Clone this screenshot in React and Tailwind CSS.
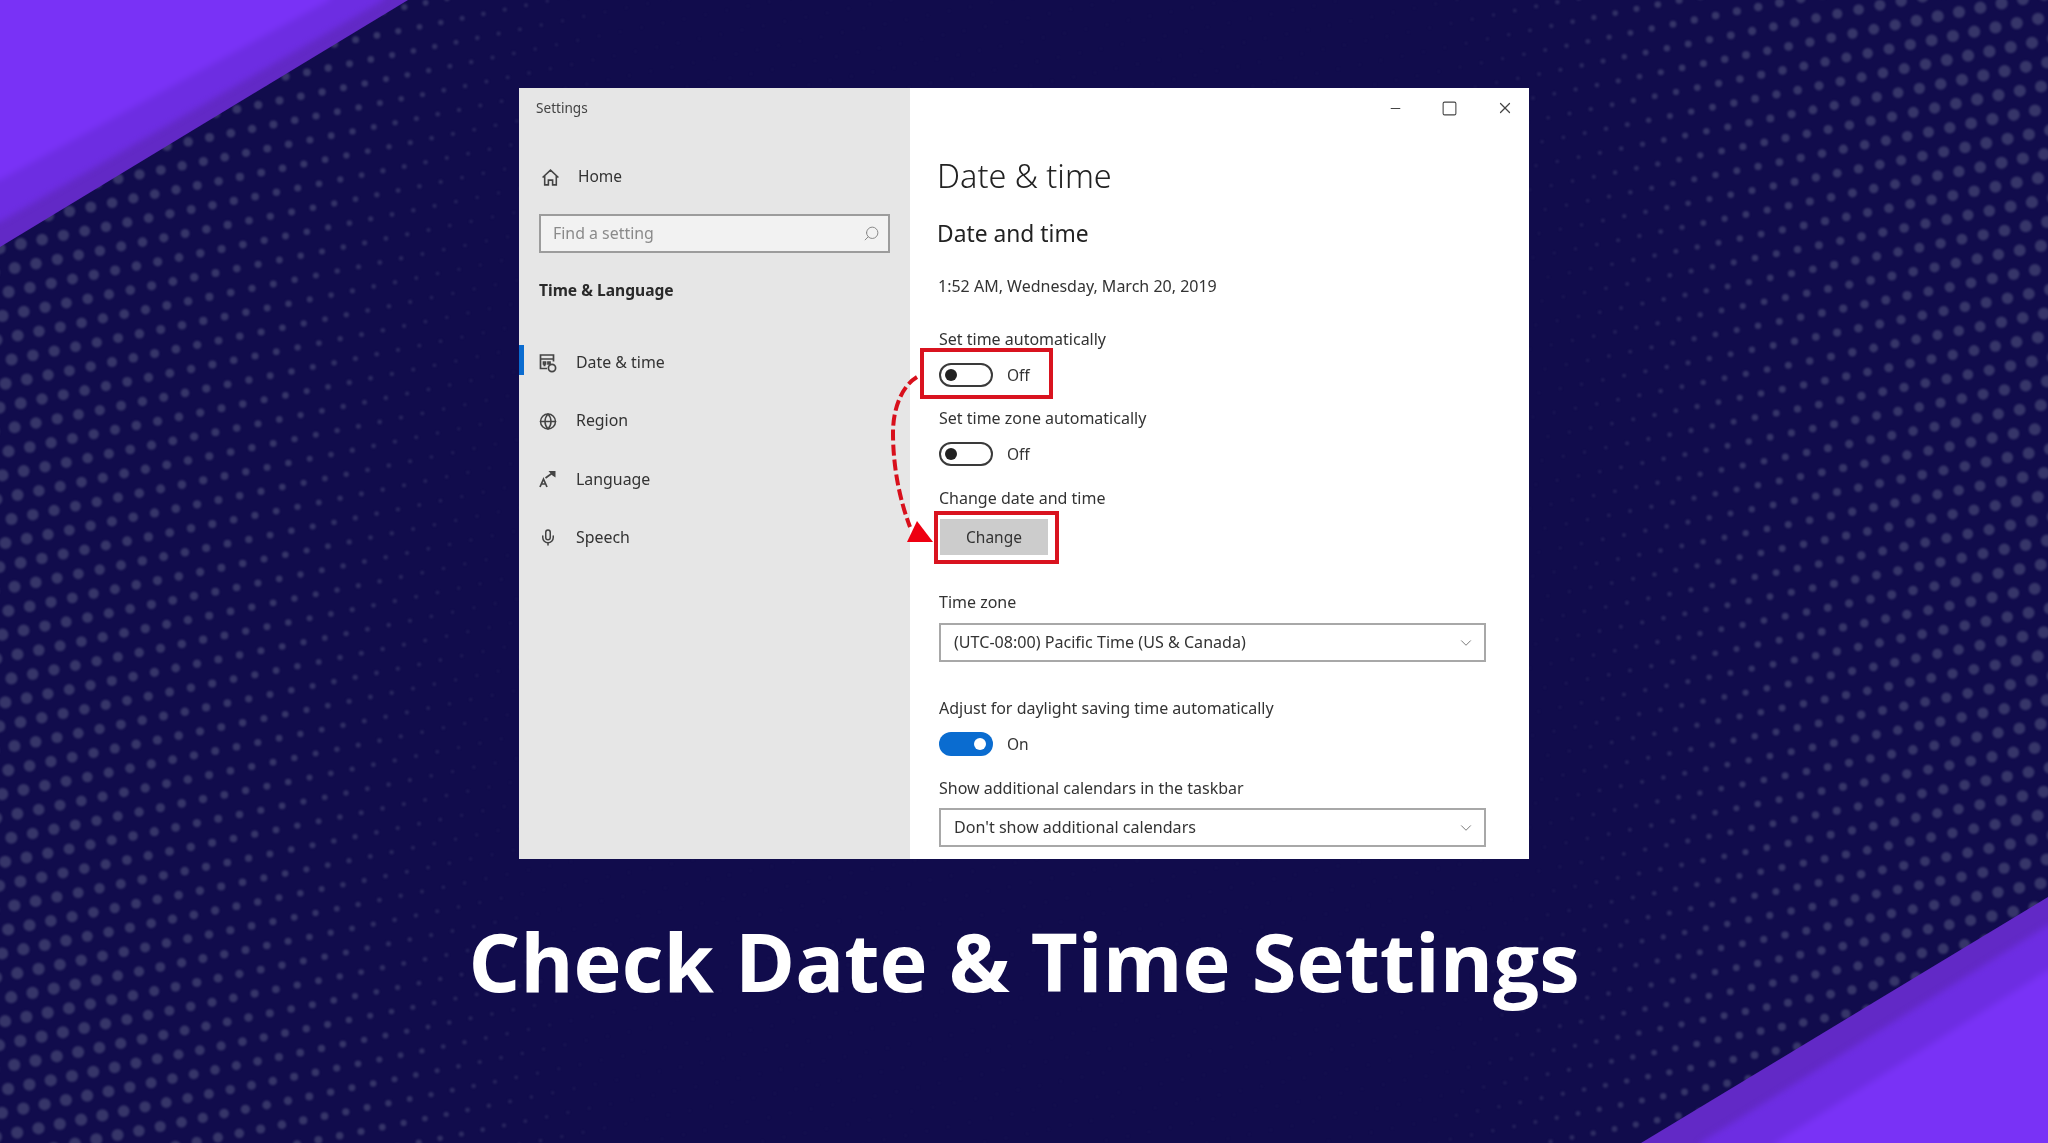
import React from "react";
import { Globe, Mic, Search, ChevronDown, X, Minus, Square } from "lucide-react";

const W = 2048, H = 1143;
function makeDots() {
  const out = [];
  const ax = 21.3, ay = -4.3, bx = 15.2, by = 19.7, ox = 106, oy = 226.7;
  for (let i = -70; i < 110; i++) {
    for (let j = -30; j < 70; j++) {
      const x = ox + i * ax + j * bx;
      const y = oy + i * ay + j * by;
      if (x < -8 || x > W + 8 || y < -8 || y > H + 8) continue;
      const d = Math.abs(x - 1024) + 0.4 * Math.max(0, Math.abs(y - 571) - 300);
      const t = Math.max(0, Math.min(1, (d - 500) / 520));
      const r = 0.9 + 5.2 * t;
      const o = 0.3 + 0.7 * Math.min(1, t * 2.2);
      out.push(<circle key={i + "_" + j} cx={x.toFixed(1)} cy={y.toFixed(1)} r={r.toFixed(2)} opacity={o.toFixed(2)} />);
    }
  }
  return out;
}
const dots = makeDots();

function Background() {
  return (
    <svg className="absolute inset-0" width={W} height={H} viewBox={`0 0 ${W} ${H}`}>
      <defs>
        <clipPath id="tl"><polygon points="0,0 408,0 0,247" /></clipPath>
        <clipPath id="br"><polygon points="2048,1143 1641,1143 2048,897" /></clipPath>
      </defs>
      <g fill="#363569" className="blur-[0.8px]">{dots}</g>
      <polygon points="0,0 408,0 0,247" fill="#6229c6" />
      <polygon points="2048,1143 1641,1143 2048,897" fill="#6229c6" />
      <g clipPath="url(#tl)">
        <g className="blur-[3px]">
          <polygon points="-20,-20 384,-20 384,0 0,222 -20,222" fill="#6d2de2" />
          <polygon points="-20,-20 330,-20 330,0 0,180 -20,180" fill="#7932f6" />
        </g>
      </g>
      <g clipPath="url(#br)">
        <g className="blur-[3px]">
          <polygon points="2068,1163 1700,1163 1700,1143 2048,925 2068,925" fill="#6d2de2" />
          <polygon points="2068,1163 1775,1163 1775,1143 2048,970 2068,970" fill="#7932f6" />
        </g>
      </g>
    </svg>
  );
}

const HomeIcon = () => (
  <svg width="19" height="19" viewBox="0 0 18 18" fill="none" stroke="#444" strokeWidth="1.5">
    <path d="M1.5 9 9 2l7.5 7M3.5 7.5V16h3.5v-4.5h4V16h3.5V7.5" />
  </svg>
);
const CalIcon = () => (
  <svg width="19" height="21" viewBox="0 0 18 20" fill="none" stroke="#444" strokeWidth="1.7">
    <path d="M8 15H1.5V1.5h13V8M1.5 5.5h13M4.5 8.5h2v2h-2zM9 8.5h2v2H9zM4.5 12h2" />
    <circle cx="13" cy="14.5" r="3.6" />
  </svg>
);
const LangIcon = () => (
  <svg width="18" height="18" viewBox="0 0 18 18" fill="none" stroke="#444" strokeWidth="1.7">
    <path d="M1 17 4.5 9l3.5 8M2.5 14h4.5" />
    <path d="M6.5 8l7-5" />
    <path d="M9.5 1h7v6.5l-3-2z" fill="#444" stroke="none" />
  </svg>
);

function NavRow({ icon, label, active }) {
  return (
    <div className="relative flex h-[58.2px] items-center pl-[20px]">
      {active && <div className="absolute left-0 top-[11px] h-[30px] w-[5px] bg-[#0a6cd0]" />}
      <div className="flex w-[18px] justify-center">{icon}</div>
      <span className="ml-[19px] text-[15.9px] text-[#333]">{label}</span>
    </div>
  );
}

function Sidebar() {
  return (
    <div className="flex w-[391px] flex-col bg-[#e6e6e6]">
      <div className="flex h-[40px] items-center pl-[17px] text-[13.6px] text-[#444]">Settings</div>
      <div className="mt-[29px] flex h-[40px] items-center pl-[22px]">
        <HomeIcon />
        <span className="ml-[18px] text-[15.5px] text-[#333]">Home</span>
      </div>
      <div className="ml-[20px] mt-[17px] flex h-[39px] w-[351px] items-center justify-between border-2 border-[#9c9c9c] bg-[#f2f2f2] pl-[12px] pr-[8px] text-[15.9px] text-[#8a8a8a]">
        <span>Find a setting</span>
        <Search size={17} strokeWidth={1.4} className="-scale-x-100 text-[#888]" />
      </div>
      <div className="ml-[20px] mt-[26px] flex h-[24px] items-center text-[15.6px] font-bold text-[#2a2a2a]">Time &amp; Language</div>
      <div className="mt-[31px] flex flex-col">
        <NavRow active icon={<CalIcon />} label="Date & time" />
        <NavRow icon={<Globe size={21} strokeWidth={2} className="text-[#444]" />} label="Region" />
        <NavRow icon={<LangIcon />} label="Language" />
        <NavRow icon={<Mic size={21} strokeWidth={2} className="text-[#444]" />} label="Speech" />
      </div>
    </div>
  );
}

function Toggle({ on, text, box, mt }) {
  return (
    <div className={`relative flex h-[24px] items-center pl-[29px] ${mt}`}>
      {on ? (
        <div className="flex h-[24px] w-[54px] items-center justify-end rounded-full bg-[#0a6cd0] pr-[7px]">
          <div className="h-[12px] w-[12px] rounded-full bg-white" />
        </div>
      ) : (
        <div className="flex h-[24px] w-[54px] items-center rounded-full border-2 border-[#3a3a3a] bg-white pl-[4px]">
          <div className="h-[12px] w-[12px] rounded-full bg-[#222]" />
        </div>
      )}
      <span className="ml-[14px] pt-[2px] text-[15.5px] text-[#333]">{text}</span>
      {box && <div className="absolute left-[10px] top-[-15px] h-[51px] w-[133px] border-4 border-[#d9131f]" />}
    </div>
  );
}

const Label = ({ children, mt }) => (
  <div className={`mb-[1px] flex h-[23px] items-center pl-[29px] text-[16px] text-[#333] ${mt}`}>{children}</div>
);

const Select = ({ children, mt }) => (
  <div className={`ml-[29px] flex h-[39px] w-[547px] items-center justify-between border-2 border-[#a8a8a8] pl-[13px] pr-[9px] text-[16.1px] text-[#333] ${mt}`}>
    <span>{children}</span>
    <ChevronDown size={18} strokeWidth={1.3} className="text-[#777]" />
  </div>
);

function Main() {
  return (
    <div className="relative flex min-w-0 flex-1 flex-col bg-white">
      <div className="flex h-[40px] items-center justify-end gap-[38px] pr-[15px] text-[#444]">
        <Minus size={15} strokeWidth={1.6} />
        <Square size={17} strokeWidth={1.5} />
        <X size={18} strokeWidth={1.6} />
      </div>
      <div className="mt-[20px] mb-[1px] flex h-[55px] items-center pl-[27px] text-[32.4px] font-light text-[#222]">Date &amp; time</div>
      <div className="mt-[10px] flex h-[40px] items-center pl-[27px] text-[22.8px] text-[#222]">Date and time</div>
      <div className="mt-[20px] flex h-[24px] items-center pl-[28px] text-[16px] text-[#333]">1:52 AM, Wednesday, March 20, 2019</div>
      <Label mt="mt-[29px]">Set time automatically</Label>
      <Toggle mt="mt-[12px]" text="Off" box />
      <Label mt="mt-[19px]">Set time zone automatically</Label>
      <Toggle mt="mt-[12px]" text="Off" />
      <Label mt="mt-[20px]">Change date and time</Label>
      <div className="relative ml-[30px] mt-[9px] flex h-[36px] w-[108px] items-center justify-center bg-[#cccccc] pt-[2px] text-[15.5px] text-[#333]">
        Change
        <div className="absolute left-[-6px] top-[-8px] h-[53px] w-[125px] border-4 border-[#d9131f]" />
      </div>
      <Label mt="mt-[35px]">Time zone</Label>
      <Select mt="mt-[9px]">(UTC-08:00) Pacific Time (US &amp; Canada)</Select>
      <Label mt="mt-[34px]">Adjust for daylight saving time automatically</Label>
      <Toggle on mt="mt-[12px]" text="On" />
      <Label mt="mt-[20px]">Show additional calendars in the taskbar</Label>
      <Select mt="mt-[8px]">Don't show additional calendars</Select>
      <svg className="absolute left-[-30px] top-[270px]" width="80" height="200" viewBox="0 0 80 200" fill="none">
        <path d="M37 19C22 28 13 50 13 75c0 32 6 65 17 94" stroke="#d8101c" strokeWidth="4" strokeDasharray="11 4" />
        <path d="M53 184H27l10-21z" fill="#ee0011" />
      </svg>
    </div>
  );
}

export default function App() {
  return (
    <div className="relative h-[1143px] w-full overflow-hidden bg-[#110c4c] font-['Noto_Sans','Open_Sans',sans-serif]">
      <Background />
      <div className="relative flex flex-col items-center">
        <div className="mt-[88px] flex h-[771px] w-[1010px] overflow-hidden blur-[0.7px]">
          <Sidebar />
          <Main />
        </div>
        <h1 className="mt-[52px] font-['Open_Sans',sans-serif] text-[81.3px] font-bold leading-[100px] text-white blur-[0.4px]">
          Check Date &amp; Time Settings
        </h1>
      </div>
    </div>
  );
}
